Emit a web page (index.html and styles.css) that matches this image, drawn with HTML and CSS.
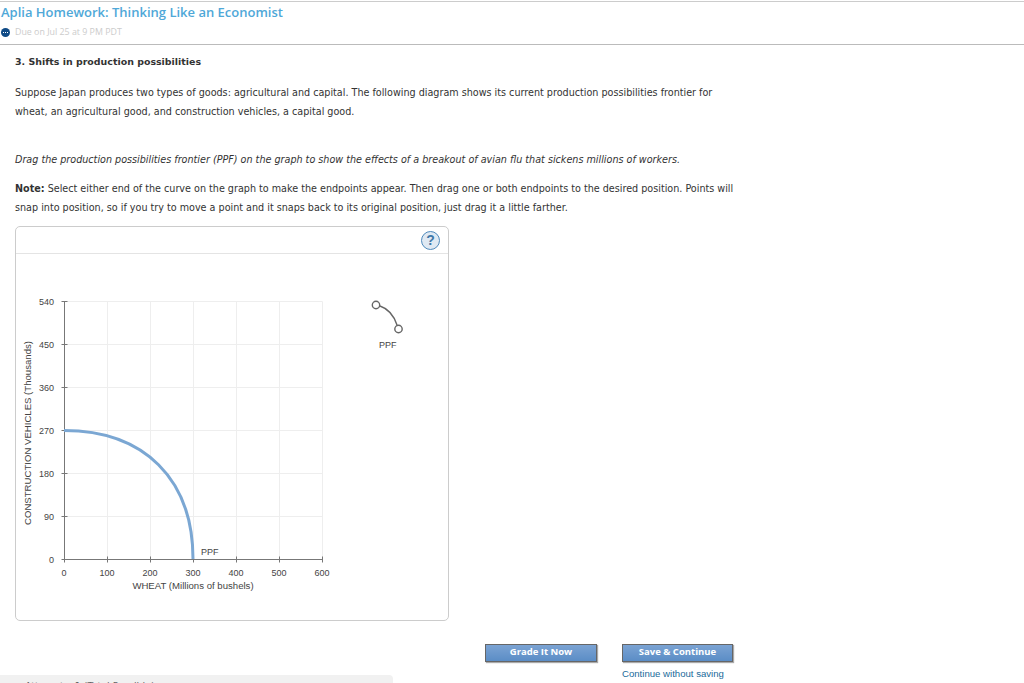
FILE: index.html
```html
<!DOCTYPE html>
<html lang="en">
<head>
  <meta charset="UTF-8">
  <meta name="viewport" content="width=device-width, initial-scale=1.0">
  <title>Aplia Homework: Thinking Like an Economist</title>
  <link rel="stylesheet" href="styles.css">
</head>
<body>
  <header class="top">
    <h1>Aplia Homework: Thinking Like an Economist</h1>
    <div class="due">
      <span class="due-dot"><i></i><i></i><i></i></span>
      <span>Due on Jul 25 at 9 PM PDT</span>
    </div>
  </header>

  <main class="content">
    <h2>3. Shifts in production possibilities</h2>
    <p class="intro">Suppose Japan produces two types of goods: agricultural and capital. The following diagram shows its current production possibilities frontier for wheat, an agricultural good, and construction vehicles, a capital good.</p>
    <p class="task">Drag the production possibilities frontier (PPF) on the graph to show the effects of a breakout of avian flu that sickens millions of workers.</p>
    <p class="note"><b>Note:</b> Select either end of the curve on the graph to make the endpoints appear. Then drag one or both endpoints to the desired position. Points will snap into position, so if you try to move a point and it snaps back to its original position, just drag it a little farther.</p>

    <section class="panel">
      <div class="panel-head">
        <span class="help">?</span>
      </div>
      <svg class="graph" width="432" height="367" viewBox="16 254 432 367">
        <g class="grid" transform="translate(.5 .5)">
          <path d="M107 301V559M150 301V559M193 301V559M236 301V559M279 301V559M322 301V559"/>
          <path d="M64 301H322M64 344H322M64 387H322M64 430H322M64 473H322M64 516H322"/>
        </g>
        <g class="axis" transform="translate(.5 .5)">
          <path d="M64 301V559H322"/>
          <path d="M61 301H67M61 344H67M61 387H67M61 430H67M61 473H67M61 516H67M61 559H67"/>
          <path d="M64 556V562M107 556V562M150 556V562M193 556V562M236 556V562M279 556V562M322 556V562"/>
        </g>
        <g class="ticks-y">
          <text x="54" y="305">540</text>
          <text x="54" y="348">450</text>
          <text x="54" y="391">360</text>
          <text x="54" y="434">270</text>
          <text x="54" y="477">180</text>
          <text x="54" y="520">90</text>
          <text x="54" y="563">0</text>
        </g>
        <g class="ticks-x">
          <text x="64" y="576">0</text>
          <text x="107" y="576">100</text>
          <text x="150" y="576">200</text>
          <text x="193" y="576">300</text>
          <text x="236" y="576">400</text>
          <text x="279" y="576">500</text>
          <text x="322" y="576">600</text>
        </g>
        <text class="axis-title" x="193" y="589">WHEAT (Millions of bushels)</text>
        <text class="axis-title" transform="translate(31 433) rotate(-90)">CONSTRUCTION VEHICLES (Thousands)</text>
        <path class="ppf" d="M64 430.5C144 430.5 193 479 193 559"/>
        <text class="label" x="201" y="555">PPF</text>

        <!-- palette item -->
        <path class="legend-line" d="M380 306C389 309 394 316 397 325"/>
        <circle class="legend-dot" cx="376" cy="305" r="3.7"/>
        <circle class="legend-dot" cx="398.5" cy="329" r="3.7"/>
        <text class="label" x="379" y="348">PPF</text>
      </svg>
    </section>
  </main>

  <footer class="bottom">
    <div class="score-bar">Attempts: 1 (Total Possible)</div>
    <div class="actions">
      <button class="btn">Grade It Now</button>
      <div class="save">
        <button class="btn">Save &amp; Continue</button>
        <a href="#">Continue without saving</a>
      </div>
    </div>
  </footer>
</body>
</html>
```

FILE: styles.css
```css
html, body { margin: 0; padding: 0; height: 683px; overflow: hidden; background: white; }
body { font-family: "DejaVu Sans", Verdana, sans-serif; font-size: 9.62px; color: #333; }

.top { border-top: 1px solid #ccc; border-bottom: 1px solid #bbb; margin-top: 1px; height: 42px; }
.top h1 { font-family: "Open Sans", sans-serif; font-size: 13px; font-weight: 600; color: #4fa8d8; margin: 0; padding: 1px 0 0 1px; line-height: 18px; }
.due { display: flex; align-items: center; gap: 5px; padding: 4px 0 0 1px; font-family: "Open Sans", sans-serif; font-size: 8.85px; line-height: 14px; color: #ccc; }
.due-dot { width: 9px; height: 9px; border-radius: 50%; background: #0f4a86; display: flex; align-items: center; justify-content: center; gap: 1px; }
.due-dot i { width: 1px; height: 1px; background: white; }

.content { padding: 0 0 0 15px; }
.content h2 { font-size: 9.45px; font-weight: bold; margin: 0; padding-top: 11px; line-height: 12px; }
.content p { margin: 0; line-height: 19px; width: 722px; }
.intro { padding-top: 15px; }
.task { padding-top: 29px; font-style: italic; }
.note { padding-top: 10px; }

.panel { width: 432px; height: 393px; margin-top: 9px; border: 1px solid #ccc; border-radius: 5px; }
.panel-head { height: 25px; padding: 1px 8px 0 0; border-bottom: 1px solid #e4e4e4; display: flex; justify-content: flex-end; align-items: center; }
.help { width: 17px; height: 17px; border-radius: 50%; border: 1px solid #4f8abc; background: #dfe9f3; color: #3f78a8; font: bold 14px/17px "Liberation Sans", sans-serif; text-align: center; }
.graph { display: block; }

.grid path { fill: none; stroke: #eee; stroke-width: 1; }
.axis path { fill: none; stroke: #777; stroke-width: 1; }
.graph text { font-family: "Liberation Sans", Arial, sans-serif; font-size: 9px; fill: #444; }
.ticks-y text { text-anchor: end; }
.ticks-x text { text-anchor: middle; }
.graph .axis-title { font-size: 9.6px; text-anchor: middle; }
.ppf { fill: none; stroke: #7ba7d3; stroke-width: 3; }
.legend-line { fill: none; stroke: #666; stroke-width: 1.4; }
.legend-dot { fill: white; stroke: #666; stroke-width: 1.4; }

.bottom { display: flex; margin-top: 23px; }
.score-bar { width: 393px; height: 8px; margin-top: 31px; overflow: hidden; box-sizing: border-box; padding: 5px 0 0 25px; background: #f1f1f1; border-radius: 0 4px 0 0; font-size: 9.5px; line-height: 12px; color: #666; }
.actions { display: flex; gap: 25px; margin-left: 92px; }
.btn { display: block; width: 112px; height: 18px; padding: 0 0 2px; border: 1px solid #666; background: linear-gradient(#7ba3d3, #5b8dc6); color: white; font-family: "Open Sans", sans-serif; font-size: 9.5px; font-weight: bold; line-height: 14px; box-shadow: 1px 1px 1px #aaa; }
.save { width: 111px; }
.save .btn { width: 111px; }
.save a { display: block; margin-top: 6px; font-family: "Liberation Sans", sans-serif; font-size: 9.6px; line-height: 12px; color: #1a6a9a; text-decoration: none; white-space: nowrap; }
```
